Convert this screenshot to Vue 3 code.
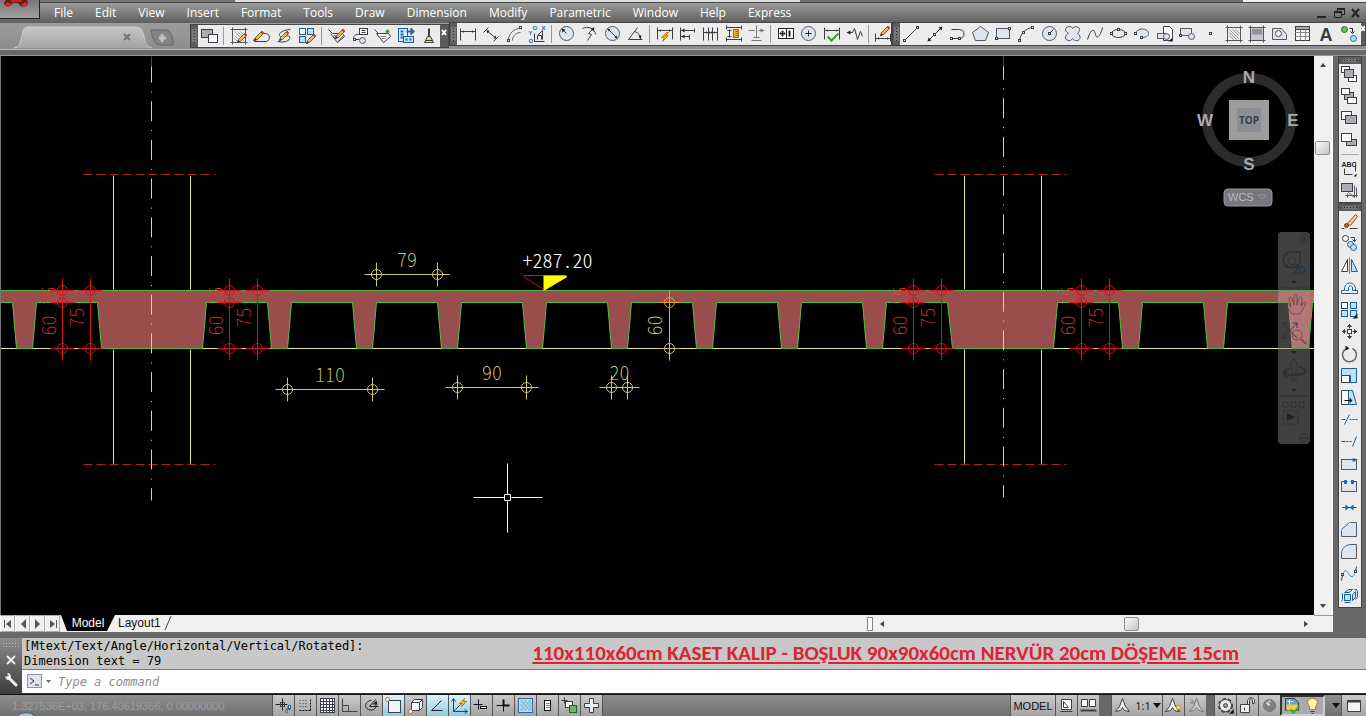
<script setup>
const menus = ['File', 'Edit', 'View', 'Insert', 'Format', 'Tools', 'Draw', 'Dimension', 'Modify', 'Parametric', 'Window', 'Help', 'Express']

// small building blocks for the icon set
const p = (d, a = '') => `<path d="${d}" ${a}/>`
const r = (x, y, w, h, a = '') => `<rect x="${x}" y="${y}" width="${w}" height="${h}" ${a}/>`
const c = (x, y, rad, a = '') => `<circle cx="${x}" cy="${y}" r="${rad}" ${a}/>`
const node = (x, y) => r(x - 1, y - 1, 2, 2, 'fill="#fff"')
const pencil = (x, y) => p(`M${x} ${y}l1-3 6-6 2 2-6 6z`, 'fill="#f3b54a" stroke="#8a5a1c"') + p(`M${x + 7} ${y - 9}l2 2`, 'stroke="#b03a2a" stroke-width="2"') + p(`M${x} ${y}l1-2 1 1z`, 'fill="#222"')
const W = 'fill="#fbfbfd"'
const G = 'fill="#a9adb3"'
const L = 'fill="#dfe5ee" stroke="#555a62"'
const B = 'stroke="#1a5f9e"'
const W_B = 'fill="#fbfbfd" stroke="#1a5f9e"'
const BF = 'fill="#bfe0f7" stroke="#1a5f9e"'
const K = 'fill="#222" stroke="none"'
const hatch = p('M3 1v17M16 1v17M1 3h17M1 16h17', 'stroke="#555"')
const dim = (y, a = 1, b = 16) => p(`M${a} ${y - 3}v12M${b} ${y - 3}v12M${a} ${y}h${b - a}`) + p(`M${a + 3} ${y - 1}v2M${b - 3} ${y - 1}v2`)

const editTools = [
  ['Draw order', r(1, 3, 11, 8, G) + r(8, 8, 9, 8, W)],
  '|',
  ['Edit hatch', hatch + p('M5 5l9 9M5 9l6 6M8 5l7 7M5 12l3 3M11 5l4 4', 'stroke="#aaa"') + pencil(8, 16)],
  ['Edit polyline', p('M1 14c2-3 5-6 8-7h4c5 0 5 7 1 8H2z') + pencil(2, 14)],
  ['Edit spline', p('M15 3C9 3 3 6 4 9s9-1 10 1-1 7-12 5') + pencil(4, 14)],
  ['Edit array', r(1, 2, 6, 6, W_B) + r(9, 2, 6, 6, BF) + r(1, 10, 6, 6, BF) + pencil(8, 17)],
  '|',
  ['Edit attribute', p('M1 3l4 4M3 7l7 9 6-7M5 7h10l2 3-7 6', W) + c(7, 10, 1) + pencil(8, 12)],
  ['Block attributes', r(9, 2, 8, 6, W) + p('M11 4h4M11 6h4M4 13c-3-3 2-6 5-5M4 13h5') + node(4, 13) + c(12, 14, 3, L)],
  ['Sync attributes', p('M1 3l4 4M3 7l7 9 7-6-2-3H5z', W) + p('M7 10h6M8 12h4', 'stroke="#888"') + p('M12 5h4M14 3v4', 'stroke="#35a048" stroke-width="2"')],
  ['Extract data', r(2, 2, 9, 13, 'fill="#d8edff" ' + B) + p('M4 5h3M4 8h3M4 11h3M10 5h7M14 2l3 3-3 3', 'stroke="#1769ae" stroke-width="2"') + r(7, 10, 10, 6, BF) + p('M9 13h2M13 13h2', 'stroke="#1769ae" stroke-width="2"')],
  ['Purge', p('M9 2v8M10 2v8') + p('M8 10h3l3 6H5z', 'fill="#f7d98a"') + p('M6 14h7')],
]
const dimTools = [
  ['Linear', dim(7)],
  ['Aligned', p('M1 8l5-5M11 17l5-5M4 6l10 8') + p('M4 6l3 0-2 3zM14 14l-3 0 2-3z', K)],
  ['Arc length', p('M3 16C3 9 8 4 15 4M7 16c0-5 4-8 8-8', 'stroke="#666"') + node(3, 16) + node(15, 3)],
  ['Ordinate', p('M6 9v8h10M9 15v-4h4v4M9 11l5-5v9') + `<text x="0" y="10" class="tiny">Y</text><text x="4" y="5" class="tiny">O</text><text x="13" y="5" class="tiny">X</text><text x="0" y="18" class="tiny">O</text>`],
  '|',
  ['Radius', c(9, 9, 7, L) + p('M9 9L5 5') + p('M4 4l4 1-3 3z', K)],
  ['Jogged', p('M2 4c6-3 12 0 13 6M7 16l4-6-3-1 5-5') + p('M14 3l-1 4-3-3z', K)],
  ['Diameter', c(9, 9, 7, L) + p('M4 4l10 10') + p('M4 4l3 1-2 2zM14 14l-3-1 2-2z', K)],
  ['Angular', p('M2 15h14M2 15L11 3M8 7c4 1 6 4 6 8') + p('M14 15l-2-4h3z', K)],
  '|',
  ['Quick dimension', dim(6, 2, 17) + p('M11 8l-5 5h3l-2 4 6-6h-3l3-3z', 'fill="#f7a823" stroke="#d07a00"')],
  ['Baseline', p('M2 3v13M2 6h14M2 12h9M11 10v5M16 4v4') + p('M3 6l3-2v4zM3 12l3-2v4z', K)],
  ['Continue', p('M2 3v13M7 3v13M11 3v13M16 3v13M2 8h14') + p('M5 7v2M8 7v2M10 7v2M13 7v2')],
  ['Dimension space', p('M2 3h15M2 1v4M17 1v4M2 15h15M2 13v4M17 13v4M5 5v8M3 6h4M3 12h4', '') + r(9, 5, 5, 8, 'fill="#f4b33b" stroke="#a86808"') + p('M11 7h3M11 9h3M11 11h3', 'stroke="#a86808"')],
  ['Dimension break', p('M1 6h6M11 6h6M9 1v12M4 16h10M6 13h6', 'stroke="#777"') + p('M17 6l-4-2v4z', 'fill="#777" stroke="none"')],
  '|',
  ['Tolerance', r(2, 4, 15, 10, 'fill="#fff" stroke="#222"') + p('M10 4v10', 'stroke="#222"') + c(6, 9, 2) + p('M3 9h6M6 6v6', 'stroke="#222"') + p('M13 6v6', 'stroke="#222" stroke-width="2"')],
  ['Center mark', c(9, 9, 7, L) + p('M6 9h6M9 6v6', 'stroke="#222"')],
  ['Inspection', dim(6, 2, 17) + p('M5 12l4 4 7-7', 'stroke="#3e9a35" stroke-width="2"')],
  ['Jogged linear', p('M2 8h5l2-4 3 11 3-8 2 5') + p('M1 8l4-2v4z', K)],
  '|',
  ['Dimension edit', p('M1 9v8M16 9v8M1 14h15M4 13v2M13 13v2') + pencil(6, 11)],
]
const drawTools = [
  ['Line', p('M2 16L15 3') + node(2, 16) + node(15, 3)],
  ['Construction line', p('M3 16L16 3') + node(9, 10) + p('M2 17l1-4 3 3zM17 2l-1 4-3-3z', K)],
  ['Polyline', p('M3 5h8c6 0 6 9 0 9H3') + node(3, 14) + node(11, 14)],
  ['Polygon', p('M9 2l8 6-3 8H4L1 8z', L)],
  ['Rectangle', r(2, 4, 13, 10, L) + node(2, 14) + node(15, 4)],
  ['Arc', p('M2 16C3 9 8 4 15 3') + node(2, 16) + node(15, 3) + node(6, 8)],
  ['Circle', c(9, 9, 7, L) + p('M9 9l4-4') + node(9, 9)],
  ['Revision cloud', p('M5 9c-5-3-3-7 1-7 2 0 3 1 3 2 2-3 8-2 7 2-1 2-2 3-2 3 5 3 2 8-2 7-2 0-3-2-3-2-2 4-8 2-7-2 1-2 3-3 3-3z', L)],
  ['Spline', p('M1 15C5 2 8 5 9 10s5 2 7-7')],
  ['Ellipse', `<ellipse cx="9" cy="9" rx="7" ry="4" fill="#e8edf4"/>` + node(2, 9) + node(16, 9) + node(9, 5)],
  ['Ellipse arc', p('M3 9c1-6 13-6 13 0 0 3-3 4-7 4', L) + node(3, 9) + node(9, 13)],
  ['Insert block', p('M8 2h6l3 3v11H8z', W) + r(2, 9, 8, 5, L) + c(11, 12, 3, L) + p('M13 17l4-4v4z', K)],
  ['Make block', r(2, 4, 11, 7, L) + c(13, 12, 3, L) + node(2, 11)],
  ['Point', node(9, 9)],
  ['Hatch', hatch + p('M5 5l9 9M5 8l7 7M5 11l4 4M8 5l6 6M11 5l4 4', 'stroke="#999"')],
  ['Gradient', hatch + r(4, 4, 11, 11, 'fill="#8e949c" stroke="none"') + r(4, 10, 11, 5, 'fill="#c6cacf" stroke="none"')],
  ['Region', p('M2 4h9l5 6v5H2z', L) + c(8, 9, 3, W)],
  ['Table', r(2, 2, 14, 14, W) + r(2, 2, 14, 3, G) + p('M2 8h14M2 12h14M7 5v11M12 5v11', 'stroke="#888"')],
  ['Multiline text', `<text x="3" y="16" class="bigA">A</text>`],
  ['Add selected', c(5, 5, 3, 'fill="#6cb94f" stroke="#32752a"') + c(14, 14, 3, 'fill="#a5d7f5" stroke="#1a6fae"') + p('M10 4h3v4M11 7l2 2 2-2', 'stroke="#222"')],
]
const orderTools = [
  ['Bring to front', r(1, 1, 8, 6, W) + r(8, 10, 8, 6, W) + r(4, 4, 9, 8, G)],
  ['Send to back', r(4, 5, 9, 7, G) + r(1, 1, 8, 6, W) + r(7, 10, 9, 6, W)],
  ['Bring above', r(1, 2, 10, 8, W) + r(5, 6, 11, 8, G)],
  ['Send under', r(6, 8, 10, 6, G) + r(1, 2, 10, 8, W)],
  '|',
  ['Text to front', `<text x="1" y="7" class="abc">ABC</text>` + p('M4 9v6h8M15 4v8') + p('M13 17l3-3v3z', K)],
  ['Hatch to back', r(1, 2, 11, 8, G) + p('M7 12v4M16 6v10M5 14h12M14 4v12M8 11l6 5', 'stroke="#555"')],
]
const modifyTools = [
  ['Erase', p('M7 11L15 2l2 2-7 9z', 'fill="#f2ca85" stroke="#8a5a20"') + c(6, 13, 2, 'fill="#c95c28" stroke="#803812"') + p('M1 16h3M9 16h8')],
  ['Copy', c(5, 4, 3, W) + c(10, 10, 3, BF) + c(13, 13, 3, BF) + p('M10 3h4v4M12 5l2 2 2-2')],
  ['Mirror', p('M7 3v12H1z', W) + p('M11 3v12h6z', BF) + p('M9 1v16', 'stroke="#777"')],
  ['Offset', p('M1 15v-3h3c-1-10 12-10 11 0h2v3zM5 12h3V9c0-2 4-2 4 0v3h4', 'fill="#eaf5fd" stroke="#1a5f9e"')],
  ['Array', r(1, 2, 6, 6, W) + r(10, 2, 6, 6, BF) + r(1, 10, 6, 6, BF) + r(10, 10, 6, 6, BF) + p('M12 18l5-5v5z', K)],
  ['Move', p('M9 2v4M9 12v4M2 9h4M12 9h4M7 4l2-2 2 2zM7 14l2 2 2-2zM4 7L2 9l2 2zM14 7l2 2-2 2z', 'fill="#333"') + r(7, 7, 4, 4, W)],
  ['Rotate', p('M6 4a7 7 0 1 0 6 0', 'stroke-width="1.5" stroke="#666"') + p('M5 1l4 3-4 2z', K)],
  ['Scale', p('M1 2h15v14h-6V9H1z', BF) + r(1, 9, 8, 7, W)],
  ['Stretch', p('M1 2h7v14H1z', W) + p('M8 2h4l4 14H8z', BF) + p('M4 12h6', 'stroke="#111"') + p('M9 9l3 3-3 3z', K)],
  ['Trim', p('M1 9h4', B) + p('M4 14L9 4', B) + p('M9 9h2M12 9h2M15 9h2', B)],
  ['Extend', p('M1 9h4M6 9h2M9 9h2') + p('M12 14l4-10', B)],
  ['Break at point', r(1, 5, 15, 10, L) + p('M12 4h3v3h-3z', 'fill="#1769ae" stroke="none"') + p('M14 5h3', 'stroke="#1769ae"')],
  ['Break', r(1, 5, 15, 10, L) + p('M7 5h3', 'stroke="#ececec" stroke-width="3"') + p('M4 4h2v3H4zM11 4h2v3h-2z', 'fill="#1769ae" stroke="#1769ae"')],
  ['Join', p('M2 9h14') + p('M5 6l4 3-4 3zM13 6L9 9l4 3z', 'fill="#1769ae" stroke="none"')],
  ['Chamfer', p('M10 2h6v14H1v-6', L) + p('M1 9l8-7', 'stroke="#1769ae"')],
  ['Fillet', p('M10 2h6v14H1v-5', L) + p('M1 11c0-5 4-9 10-9', 'stroke="#1769ae"')],
  ['Blend curves', p('M2 12C3 5 6 5 8 9s5 5 7-2', 'stroke="#3f8fd0"') + p('M1 16l1-6M15 7l1-5') + node(2, 10) + node(15, 7)],
  ['Explode', r(4, 8, 6, 6, BF) + p('M4 6l4-3h4l-3 3zM12 8l3-3v6l-3 3z', BF) + p('M2 7v6l-1 2M14 3h2l1 2v5l-2 3M4 16h6', B)],
]
const toggles = [
  ['Infer constraints', p('M1 8h12M8 2v12', 'stroke="#222"') + r(6, 6, 4, 4) + p('M13 10v6h-2v-3h5v-3', 'stroke="#b5592a"') + r(14, 9, 2, 3, W_B)],
  ['Snap', p('M3 4h9M3 7h9M3 10h9', 'stroke-dasharray="1 2" stroke="#333"') + p('M3 14h12M14 3v11', 'stroke-dasharray="2 1" stroke="#111"')],
  ['Grid', r(2, 2, 14, 14, W) + p('M2 5h14M2 8h14M2 11h14M2 14h14M5 2v14M8 2v14M11 2v14M14 2v14')],
  ['Ortho', p('M2 2v13h15M2 9h6v6', 'stroke="#444"')],
  ['Polar', p('M9 4c-6 0-8 7-3 9s9-2 7-6M7 10h9M7 10l6-7', 'stroke="#222"') + p('M10 8h5l-1-4z', K)],
  ['Object snap', r(4, 4, 12, 12, 'fill="#f2f5f8"') + c(3, 3, 2, 'fill="#fff" stroke="#c0602d"'), true],
  ['3D object snap', p('M5 6l3-3h8v8l-3 3H5z', W) + p('M13 14V6H5M13 6l3-3') + c(4, 15, 2, 'fill="#fff" stroke="#c0602d"')],
  ['Object snap tracking', p('M3 14L13 4M3 14h11', 'stroke="#222"'), true],
  ['Dynamic UCS', p('M3 2v13h14M3 15l7-7M1 5l2-3 2 3M14 13l3 2-3 2') + p('M14 2l-5 5h3l-1 3 5-5h-3z', 'fill="#ffc84b" stroke="#b67814"'), true],
  ['Dynamic input', p('M1 8h9M6 3v10', 'stroke="#111"') + r(8, 10, 6, 2, 'fill="#fff" stroke="#111"')],
  ['Lineweight', p('M2 9h12M9 9v6', 'stroke="#111"') + p('M9 3v6h6', 'stroke="#111" stroke-width="2"')],
  ['Transparency', r(2, 2, 14, 14, 'fill="#b9def2" stroke="#31668f"') + p('M4 5h12M4 9h12M4 13h12', 'stroke="#78b2d6" stroke-dasharray="2 2" stroke-width="2"') + p('M6 7h10M6 11h10', 'stroke="#78b2d6" stroke-dasharray="2 2" stroke-width="2"')],
  ['Quick properties', r(6, 4, 6, 10, 'fill="#fff" stroke="#111"') + p('M8 7h3M8 9h3M8 11h3', 'stroke="#111" stroke-dasharray="1 1"')],
  ['Selection cycling', p('M1 4h6M4 1v6') + r(5, 5, 7, 6, W) + r(9, 9, 7, 7, 'fill="#72b36a" stroke="#255f22"')],
  ['Annotation monitor', p('M7 2h4v5h5v4h-5v5H7v-5H2V7h5z', 'fill="#e5edf7"')],
]

// geometry of the ribbed slab section
const cavities = [
  [-6, -2, 16, 12], [36, 32, 101, 97], [206, 202, 271, 267],
  ...[291, 376, 461, 546, 631, 716, 801].map((x) => [x, x - 4, x + 65, x + 61]),
  [886, 882, 952, 947], [1057, 1053, 1122, 1118], [1142, 1138, 1207, 1203], [1227, 1223, 1292, 1288], [1312, 1308, 1377, 1373],
]
const cavity = ([tl, bl, br, tr]) => `M${bl} 348L${tl} 302H${tr}L${br} 348`
const solids = [[12, 36, 32, 16], [97, 206, 202, 101], ...[267, 352, 437, 522, 607, 692, 777, 862].map((x) => [x, x + 24, x + 20, x + 4]), [947, 1057, 1053, 952], [1118, 1142, 1138, 1122], [1203, 1227, 1223, 1207], [1288, 1312, 1308, 1292]]
const slab = 'M0 290H1316V302H0Z' + solids.map(([a, b, d, e]) => `M${a} 302H${b}L${d} 348H${e}Z`).join('')
const axes = [{ x: 151, y: 62, e: 500 }, { x: 1003, y: 59, e: 497 }]
const redDims = [62, 229, 913, 1081]
const yDims = [
  { a: 376, b: 437, y: 274, t: '79', ty: 266 },
  { a: 287, b: 372, y: 389, t: '110', ty: 381 },
  { a: 457, b: 526, y: 387, t: '90', ty: 379 },
  { a: 611, b: 627, y: 387, t: '20', ty: 379 },
]
const mark = (x, y) => `M${x - 12} ${y}h24M${x} ${y - 12}v24M${x - 5} ${y}a5 5 0 1 0 10 0a5 5 0 1 0 -10 0`
</script>

<template>
  <div class="app">
    <div class="strip"></div>
    <button class="logo" aria-label="Application menu">
      <svg width="38" height="18" viewBox="0 0 38 18"><path d="M5 0h21l1 3c-1 4-7 5-9 1l-1-1h-5l-1 1c-2 4-8 3-8-1z" fill="#6d1712" /><path d="M6 2l5 2c-2 3-5 4-7 1zM25 2l-5 2c2 3 5 4 7 1z" fill="#c8301c" /><path d="M10 0h11v2H10z" fill="#c8201a" /></svg>
    </button>
    <nav class="menu">
      <button v-for="m in menus" :key="m">{{ m }}</button>
      <div class="wins">
        <button aria-label="Minimize"><svg width="12" height="14"><path d="M1 11h9" stroke="#222" stroke-width="2" /></svg></button>
        <button aria-label="Restore"><svg width="12" height="14" fill="none" stroke="#222"><path d="M4.500 5V2.500h7v6H9" stroke-width="1" /><path d="M4 3h8M1 6h8" stroke-width="2" /><path d="M1.500 5.500h7v6h-7z" /></svg></button>
        <button aria-label="Close"><svg width="12" height="14"><path d="M2 3l7 8M9 3l-7 8" stroke="#222" stroke-width="2" /></svg></button>
      </div>
    </nav>
    <div class="toolrow">
      <div class="filetabs">
        <svg width="190" height="26" viewBox="0 0 190 26">
          <defs><linearGradient id="tabg" x1="0" y1="0" x2="0" y2="1"><stop offset="0" stop-color="#c6c6c6" /><stop offset="1" stop-color="#a4a4a4" /></linearGradient></defs>
          <path d="M14 25c6-1 6-5 8-12 1-7 2-9 6-9h108c5 0 6 3 8 9 1 7 3 11 8 12z" fill="url(#tabg)" />
          <path d="M14 25c6-1 6-5 8-12 1-7 2-9 6-9h108c5 0 6 3 8 9 1 7 3 11 8 12" fill="none" stroke="#cfcfcf" />
          <path d="M124 11l6 6M130 11l-6 6" stroke="#737373" stroke-width="2" />
          <path d="M151 7h14c5 0 8 4 8 15h-12c-6 0-9-6-10-15z" fill="#858585" stroke="#686868" />
          <path d="M159 15h7M162 11v8" stroke="#c3c3c3" stroke-width="3" />
        </svg>
      </div>
      <div class="bar low">
        <i class="grip"></i>
        <template v-for="(t, i) in editTools" :key="i">
          <i v-if="t === '|'" class="sep"></i>
          <button v-else :aria-label="t[0]"><svg class="ic" viewBox="-0.5 -0.5 20 20" v-html="t[1]"></svg></button>
        </template>
        <button class="barclose" aria-label="Close toolbar"><svg width="6" height="12"><path d="M1 5l4 5M5 5l-4 5" stroke="#fff" stroke-width="2" /></svg></button>
      </div>
      <div class="bar">
        <i class="grip"></i>
        <template v-for="(t, i) in dimTools" :key="i">
          <i v-if="t === '|'" class="sep"></i>
          <button v-else :aria-label="t[0]"><svg class="ic" viewBox="-0.5 -0.5 20 20" v-html="t[1]"></svg></button>
        </template>
      </div>
      <div class="bar last">
        <i class="grip"></i>
        <button v-for="t in drawTools" :key="t[0]" :aria-label="t[0]"><svg class="ic" viewBox="-0.5 -0.5 20 20" v-html="t[1]"></svg></button>
        <button class="barclose" aria-label="Close toolbar"><svg width="6" height="12"><path d="M1 3l4 5M5 3l-4 5" stroke="#fff" stroke-width="2" /></svg></button>
      </div>
    </div>
    <div class="band"></div>

    <main class="work">
      <section class="doc">
        <div class="view">
          <svg class="drawing" viewBox="1 56 1313 559" preserveAspectRatio="xMinYMin slice">
            <g transform="translate(0.500 0.500)" class="lines">
              <path d="M0 348H1314" stroke="#e6e68c" />
              <path :d="slab" fill="#994d4d" />
              <path d="M0 290H1314" stroke="#4fb53a" />
              <path v-for="(v, i) in cavities" :key="i" :d="cavity(v)" stroke="#4fc23a" />
              <path d="M16 348H32M101 348H202M271 348h16M356 348h16M441 348h16M526 348h16M611 348h16M696 348h16M781 348h16M866 348h16M952 348h101M1122 348h16M1207 348h16M1292 348h16" stroke="#4fb53a" />
              <path d="M113 175V289M190 175V289M113 349V463M190 349V463M964 175V289M1041 175V289M964 349V463M1041 349V463" stroke="#e6e68c" />
              <path d="M83 174H215M83 464H215M934 174h132M934 464h132" stroke="#b32020" stroke-dasharray="9 4" />
              <template v-for="a in axes" :key="a.x">
                <path :d="`M${a.x} ${a.y}V${a.e}`" stroke="#cfcfcf" stroke-dasharray="20 9 1 8.7" />
                <path :d="`M${a.x} 56v10`" stroke="#c01818" />
              </template>
              <g v-for="x in redDims" :key="x">
                <path :d="mark(x, 290) + mark(x, 302) + mark(x, 348) + mark(x + 28, 290) + mark(x + 28, 348) + `M${x} 290V348M${x + 28} 290V348`" stroke="#d41616" />
                <text :transform="`translate(${x - 7} 296) rotate(-90)`" class="cad red">15</text>
                <text :transform="`translate(${x - 7} 325) rotate(-90)`" class="cad red">60</text>
                <text :transform="`translate(${x + 21} 317) rotate(-90)`" class="cad red">75</text>
              </g>
              <g v-for="d in yDims" :key="d.t">
                <path :d="mark(d.a, d.y) + mark(d.b, d.y) + `M${d.a} ${d.y}H${d.b}`" stroke="#c9c973" />
                <text :x="(d.a + d.b) / 2" :y="d.ty" class="cad">{{ d.t }}</text>
              </g>
              <path :d="mark(669, 348) + 'M669 302V348'" stroke="#c9c973" />
              <path :d="mark(669, 302)" stroke="#d8a520" />
              <text transform="translate(661 325) rotate(-90)" class="cad">60</text>
              <path d="M523 275H566M523 276L543 289" stroke="#c01818" />
              <path d="M543 275H566V277L544 290H543Z" fill="#ffff00" />
              <text x="557" y="267" class="cad white">+287.20</text>
              <path d="M473 497h31M511 497h31M507 463v31M507 501v31M504 494h6v6h-6z" stroke="#f2f2f2" />
            </g>
            <circle cx="1249" cy="120" r="42" fill="none" stroke="#2b2b2b" stroke-width="10" />
            <g class="compass"><text x="1249" y="83">N</text><text x="1249" y="170">S</text><text x="1205" y="126">W</text><text x="1293" y="126">E</text></g>
            <rect x="1229" y="100" width="40" height="40" fill="#9c9c9c" /><rect x="1237" y="108" width="24" height="24" fill="#8b8f95" />
            <text x="1249" y="124" class="top">TOP</text>
            <rect x="1224" y="189" width="48" height="17" rx="4" fill="#77777d" stroke="#96969c" />
            <text x="1228" y="201" class="wcs">WCS</text><path d="M1258 195h8l-4 4z" fill="none" stroke="#94949a" />
            <rect x="1278" y="232" width="32" height="212" rx="4" fill="#808080" fill-opacity=".5" />
            <path d="M1279 291h35v11h-2l-4 46h-16l-4-46h-10z" fill="#e08a8a" fill-opacity=".45" />
            <g fill="none" stroke="#2d2d2d" stroke-opacity=".8">
              <circle cx="1304" cy="238" r="4" /><path d="M1302 236l4 4M1306 236l-4 4M1279 288h30M1279 396h30" />
              <path d="M1283 261a9 9 0 0 1 9-9h8v10a9 9 0 0 1-17-1z" stroke-width="2" /><circle cx="1292" cy="261" r="4" /><path d="M1288 265l-3 3M1295 265l3 3" />
              <path d="M1287 307c-3-6 2-5 4 0l-2-8c0-3 3-2 3 0l2 6v-9c1-2 3-2 3 0v9l2-7c1-2 3-1 3 1l-1 7 3-4c2-1 2 1 1 3l-5 9h-8z" stroke="#713f3f" />
              <path d="M1283 323l14 15M1297 323l-14 15M1283 328v-5h5M1283 333v5h5M1293 323h4v5" /><circle cx="1297" cy="335" r="5" stroke="#6d4545" /><path d="M1301 339l5 5" stroke="#6d4545" stroke-width="2" />
              <path d="M1292 380v-15h-3l5-6 4 6h-2v15z" /><path d="M1290 368c-10 3-8 7 4 7s16-5 5-8M1287 371l-3 3 3 4" stroke-width="2" />
              <path d="M1283 402h5v5h-5zM1291 402h5v5h-5zM1299 402h5v5h-5zM1283 411h15v13h-15z" /><circle cx="1304" cy="438" r="4" /><path d="M1301 438h6" />
            </g>
            <path d="M1287 413v8l8-4zM1291 281h6l-3 3zM1291 351h6l-3 3zM1291 389h6l-3 3z" fill="#222" />
            <text x="1293" y="274" class="two">2D</text>
          </svg>
          <div class="vscroll">
            <button aria-label="Scroll up"><svg width="8" height="6"><path d="M1 5h6L4 1z" fill="#444" /></svg></button>
            <i class="thumb"></i>
            <button aria-label="Scroll down"><svg width="8" height="6"><path d="M1 1h6L4 5z" fill="#444" /></svg></button>
          </div>
        </div>
        <div class="tabs">
          <button class="nav" aria-label="First tab"><svg width="12" height="12"><path d="M9 2v8L4 6z" fill="#555" /><path d="M2.500 2v8" stroke="#555" /></svg></button>
          <button class="nav" aria-label="Previous tab"><svg width="12" height="12"><path d="M9 1v10L4 6z" fill="#555" /></svg></button>
          <button class="nav" aria-label="Next tab"><svg width="12" height="12"><path d="M3 1v10l5-5z" fill="#555" /></svg></button>
          <button class="nav" aria-label="Last tab"><svg width="12" height="12"><path d="M3 2v8l5-4z" fill="#555" /><path d="M9.500 2v8" stroke="#555" /></svg></button>
          <button class="tab on">Model</button>
          <button class="tab">Layout1</button>
          <svg class="slash" width="9" height="16"><path d="M2 15L8 1" stroke="#444" /></svg>
          <div class="hscroll">
            <i class="split"></i>
            <button aria-label="Scroll left"><svg width="6" height="8"><path d="M5 1v6L1 4z" fill="#444" /></svg></button>
            <i class="thumb"></i>
            <button aria-label="Scroll right"><svg width="6" height="8"><path d="M1 1v6l4-3z" fill="#444" /></svg></button>
          </div>
          <i class="corner"></i>
        </div>
      </section>
      <aside class="side">
        <div class="vbar">
          <i class="hgrip"></i>
          <template v-for="(t, i) in orderTools" :key="i">
            <i v-if="t === '|'" class="vsep"></i>
            <button v-else :aria-label="t[0]"><svg class="ic" viewBox="-0.5 -0.5 20 20" v-html="t[1]"></svg></button>
          </template>
        </div>
        <div class="vbar">
          <i class="hgrip"></i>
          <button v-for="t in modifyTools" :key="t[0]" :aria-label="t[0]"><svg class="ic" viewBox="-0.5 -0.5 20 20" v-html="t[1]"></svg></button>
        </div>
      </aside>
    </main>

    <section class="command">
      <div class="cmdside">
        <i class="cmdgrip"></i>
        <button aria-label="Close command window"><svg width="12" height="12"><path d="M2 2l8 8M10 2l-8 8" stroke="#eee" stroke-width="2" /></svg></button>
        <button aria-label="Customize"><svg width="16" height="16"><path d="M5 5l8 8" stroke="#eee" stroke-width="3" stroke-linecap="round" /><path d="M2 4c0 5 6 5 6 1 0-2-1-4-4-4l2 3-2 2z" fill="#eee" /></svg></button>
      </div>
      <div class="cmdmain">
        <div class="history">
          <div class="log"><div>[Mtext/Text/Angle/Horizontal/Vertical/Rotated]:</div><div>Dimension text = 79</div></div>
          <div class="title">110x110x60cm KASET KALIP - BOŞLUK 90x90x60cm NERVÜR 20cm DÖŞEME 15cm</div>
        </div>
        <div class="prompt">
          <button aria-label="Recent commands"><svg width="25" height="15" viewBox="0 0 25 15"><rect x=".5" y=".5" width="14" height="13" fill="#dfe4ee" stroke="#8d93a0" /><path d="M3 4l4 3-4 3M8 11h4" fill="none" stroke="#333" /><path d="M19 6h5l-2.500 3z" fill="#666" /></svg></button>
          <input type="text" placeholder="Type a command" aria-label="Command" />
        </div>
      </div>
    </section>

    <footer class="status">
      <div class="coords">1.327536E+03, 176.40619356, 0.00000000</div>
      <i class="orb"></i>
      <button v-for="t in toggles" :key="t[0]" class="st" :class="{ lit: t[2] }" :aria-label="t[0]"><svg class="ic" viewBox="-0.5 -0.5 20 20" v-html="t[1]"></svg></button>
      <div class="fill"></div>
      <button class="st model">MODEL</button>
      <button class="st" aria-label="Quick view layouts"><svg class="ic" viewBox="-0.5 -0.5 20 20"><path d="M4 3h10v10H4z" fill="#fff" /><path d="M6 5v6h5zM3 15h12" /></svg></button>
      <button class="st" aria-label="Quick view drawings"><svg class="ic" viewBox="-0.5 -0.5 20 20"><path d="M2 3h6v7H2zM10 3h6v7h-6z" fill="#fff" /><path d="M1 14h16" stroke-width="2" /></svg></button>
      <i class="gap wide"></i>
      <button class="st scale"><svg class="ic" viewBox="-0.5 -0.5 20 20"><path d="M9 2l3 8 4 5-5-1-2-3-2 3-5 1 4-5z" fill="#e8edf2" /></svg><span>1:1</span><svg width="8" height="6"><path d="M0 0h8L4 5z" fill="#111" /></svg></button>
      <button class="st" aria-label="Annotation visibility"><svg class="ic" viewBox="-0.5 -0.5 20 20"><path d="M8 2l3 8 4 5-5-1-2-3-2 3-5 1 4-5z" fill="#f3f3f3" /><circle cx="14" cy="11" r="2" fill="#ffdd73" stroke="#d08a1b" /><path d="M13 15h2" /></svg></button>
      <button class="st" aria-label="Auto scale"><svg class="ic faint" viewBox="-0.5 -0.5 20 20"><path d="M10 2l3 8 4 5-5-1-2-3-2 3-5 1 4-5z" fill="#c8c8c8" /><path d="M4 3l4 3M3 6l4 1" /></svg></button>
      <i class="gap"></i>
      <button class="st" aria-label="Workspace"><svg class="ic" viewBox="-0.5 -0.5 20 20"><circle cx="9" cy="9" r="6" stroke-width="3" stroke-dasharray="3 2" /><circle cx="9" cy="9" r="6" fill="#eee" /><circle cx="9" cy="9" r="2" fill="#999" /><path d="M13 17l4-4v4z" fill="#111" /></svg></button>
      <button class="st" aria-label="Lock interface"><svg class="ic" viewBox="-0.5 -0.5 20 20"><path d="M2 8h9v8H2zM9 8V4c1-4 7-3 7 0v3h-2V4c0-2-3-2-3 0v4M6 11v3" fill="#eee" /></svg></button>
      <button class="st" aria-label="Hardware acceleration"><svg class="ic faint" viewBox="-0.5 -0.5 20 20"><circle cx="9" cy="9" r="6" fill="#7b8084" /><path d="M9 9L6 6M9 4v2" stroke="#ddd" stroke-width="2" /></svg></button>
      <div class="tray">
        <button aria-label="Drawing status"><svg class="ic" viewBox="-0.5 -0.5 20 20"><path d="M3 2h9l4 4v8H3z" fill="#65a1d0" /><path d="M4 8h11v6H4z" fill="#f1cd3c" stroke="none" /><path d="M5 5h6M7 3v5" stroke="#fff" /><path d="M8 13l3 3 6-6" stroke="#42a43a" stroke-width="2" /></svg></button>
        <button aria-label="Tips"><svg class="ic" viewBox="-0.5 -0.5 20 20"><path d="M6 10c-4-5-1-8 3-8s7 3 3 8v3H6z" fill="#ffefb8" stroke="#a88032" /><path d="M7 15h4M8 17h2" /></svg></button>
      </div>
      <button class="more" aria-label="Status menu"><svg width="8" height="6"><path d="M0 0h8L4 5z" fill="#111" /></svg></button>
      <button class="st clean" aria-label="Clean screen"><svg class="ic" viewBox="-0.5 -0.5 20 20"><path d="M3 4h13v11H3z" fill="#f4f4f4" /><path d="M3 5h13" stroke-width="2" /></svg></button>
    </footer>
  </div>
</template>

<style>
html, body { margin: 0; background: #6a6a6a; }
</style>

<style scoped>
.app { position: relative; display: flex; flex-direction: column; height: 100vh; min-width: 1180px; overflow: hidden; background: #686868; font-family: "Open Sans", "Noto Sans", sans-serif; font-size: 12px; color: #111; }
button { margin: 0; padding: 0; border: 0; background: none; font: inherit; color: inherit; display: flex; align-items: center; justify-content: center; flex: none; }
svg { display: block; flex: none; }
i { display: block; flex: none; }
.ic { width: 20px; height: 20px; fill: none; stroke: #3b3f46; stroke-width: 1; }
.ic.faint { stroke: #777; }
.ic :deep(.tiny) { font: bold 6px "Liberation Sans", sans-serif; fill: #1769ae; stroke: none; }
.ic :deep(.bigA) { font: bold 18px "Liberation Sans", sans-serif; fill: #3a3e44; stroke: none; }
.ic :deep(.abc) { font: bold 7px "Liberation Sans", sans-serif; fill: #222; stroke: none; }

.strip { height: 2px; flex: none; background: linear-gradient(90deg, #777 0 235px, #ddd 235px 800px, #6d6d6d 800px 1243px, #f3eef3 1243px); border-bottom: 1px solid #444; }
.logo { position: absolute; left: 0; top: 0; width: 40px; height: 19px; background: linear-gradient(#777, #a0a0a0); border-right: 1px solid #222; border-bottom: 1px solid #222; align-items: flex-start; }
.menu { display: flex; align-items: center; gap: 22px; height: 20px; flex: none; padding: 0 4px 0 54px; background: linear-gradient(#9b9b9b, #5f5f5f); color: #fff; }
.menu > button { line-height: 18px; }
.wins { margin-left: auto; display: flex; gap: 5px; }
.toolrow { display: flex; height: 26px; flex: none; background: linear-gradient(#9c9c9c, #8d8d8d); border-bottom: 1px solid #bbb; }
.filetabs { width: 190px; flex: none; }
.bar { display: flex; align-items: center; box-sizing: border-box; height: 24px; margin-top: -1px; background: #ececec; border: 1px solid #444; flex: none; }
.bar.low { margin-top: 1px; }
.bar button { width: 23px; height: 22px; }
.bar:nth-child(3) { width: 443px; overflow: hidden; }
.bar.last { flex: 1; overflow: hidden; }
.grip { width: 7px; height: 22px; background: radial-gradient(circle, #222 1px, #777 1px) 1px 3px / 3px 3px #5c5c5c; border: solid #5c5c5c; border-width: 4px 1px; box-sizing: border-box; }
.sep { width: 1px; height: 18px; margin: 0 3px 0 2px; background: #999; }
.bar .barclose { width: 8px; height: 22px; margin-left: auto; background: #5c5c5c; align-items: flex-start; }
.bar.last .barclose { width: 4px; }
.band { height: 5px; flex: none; background: #686868; border-bottom: 1px solid #999; box-sizing: content-box; }

.work { flex: 1; min-height: 0; display: flex; }
.doc { flex: 1; min-width: 0; display: flex; flex-direction: column; }
.view { flex: 1; min-height: 0; display: flex; border-left: 1px solid #777; }
.drawing { flex: 1; min-width: 0; height: 100%; background: #000; }
.lines { fill: none; stroke: none; stroke-width: 1; }
.cad { font: 100 20px "Noto Sans CJK JP", "Liberation Sans", sans-serif; font-feature-settings: "hwid"; fill: #e6e688; stroke: none; text-anchor: middle; }
.cad.red { fill: #f03434; }
.cad.white { fill: #fff; font-weight: 300; }
.compass text { font: bold 17px "Liberation Sans", sans-serif; fill: #aaa; text-anchor: middle; }
.top { font: bold 10px "Open Sans", sans-serif; fill: #3c3c40; text-anchor: middle; }
.wcs { font: 11px "Liberation Sans", sans-serif; fill: #b8b8be; }
.two { font: bold 10px "Liberation Sans", sans-serif; fill: #28344a; }
.vscroll { width: 17px; flex: none; display: flex; flex-direction: column; align-items: center; background: #f0f0f0; border-right: 2px solid #fafafa; }
.vscroll button { width: 17px; height: 18px; }
.vscroll button:last-child { margin-top: auto; }
.thumb { width: 15px; height: 14px; box-sizing: border-box; border: 1px solid #909090; border-radius: 2px; background: linear-gradient(135deg, #fafafa, #c4c4c4); }
.vscroll .thumb { margin-top: 67px; }
.tabs { display: flex; height: 17px; flex: none; background: #f0f0f0; color: #111; font-family: "Liberation Sans", sans-serif; }
.nav { width: 15px; height: 17px; box-sizing: border-box; border: 1px solid #aaa; border-left-color: #fff; }
.tab { height: 16px; }
.tab.on { width: 54px; margin-left: 1px; background: #000; color: #fff; clip-path: polygon(0 0, 100% 0, 46px 100%, 6px 100%); }
.tab:not(.on) { padding: 0 2px 0 3px; }
.hscroll { margin-left: auto; width: 447px; display: flex; align-items: center; }
.split { width: 4px; height: 12px; border: 1px solid #888; background: #fff; }
.hscroll button { width: 17px; height: 16px; }
.hscroll .thumb { margin-left: 234px; }
.hscroll button:last-child { margin-left: auto; }
.corner { width: 19px; height: 16px; border-top: 1px solid #999; }
.side { width: 24px; flex: none; margin: 0 4px 0 5px; }
.vbar { display: flex; flex-direction: column; align-items: center; box-sizing: border-box; background: #ececec; border: 1px solid #444; }
.vbar button { width: 22px; height: 22px; }
.hgrip { align-self: stretch; height: 7px; box-sizing: border-box; border: solid #5c5c5c; border-width: 2px 4px; background: radial-gradient(circle, #222 1px, #777 1px) 0 0 / 3px 3px; }
.vsep { width: 18px; height: 1px; margin: 2px 0 3px; background: #aaa; }

.command { display: flex; height: 56px; margin-top: 6px; flex: none; }
.cmdside { width: 22px; flex: none; display: flex; flex-direction: column; align-items: center; justify-content: space-between; padding: 4px 0 6px; box-sizing: border-box; background: linear-gradient(#8c8c8c, #3c3c3c); }
.cmdgrip { width: 18px; height: 5px; background: radial-gradient(circle, #bbb 1px, transparent 1px) 0 0 / 3px 3px; }
.cmdmain { flex: 1; min-width: 0; }
.history { display: flex; justify-content: space-between; align-items: flex-start; height: 32px; background: #c8c8c8; border-bottom: 1px solid #777; box-sizing: border-box; padding: 0 127px 0 2px; white-space: nowrap; }
.log { font: 12px/15px "DejaVu Sans Mono", "Liberation Mono", monospace; padding-top: 1px; color: #000; }
.title { font: bold 21px/30px Carlito, Lato, sans-serif; color: #dc2430; text-decoration: underline; text-decoration-thickness: 2px; text-underline-offset: 2px; }
.prompt { display: flex; align-items: center; height: 24px; background: #fff; padding-left: 5px; border-bottom: 1px solid #333; box-sizing: border-box; }
.prompt input { flex: 1; min-width: 0; border: 0; outline: 0; padding: 0 0 0 6px; background: none; font: italic 12px/20px "DejaVu Sans Mono", "Liberation Mono", monospace; }
.prompt input::placeholder { color: #8c8c8c; opacity: 1; }

.status { position: relative; display: flex; align-items: stretch; height: 22px; flex: none; background: linear-gradient(#8f8f8f, #707070); box-sizing: border-box; border-top: 1px solid #111; overflow: hidden; }
.coords { width: 272px; flex: none; box-sizing: border-box; padding-left: 12px; font: 11px/23px "Liberation Sans", sans-serif; color: #9c9c9c; white-space: nowrap; }
.orb { position: absolute; left: 12px; top: 17px; width: 28px; height: 28px; border-radius: 50%; background: #a8c1d8; border: 1px solid #44566a; box-sizing: border-box; }
.st { width: 22px; box-sizing: border-box; border-left: 1px solid #555; background: linear-gradient(#cacaca, #a4a4a4); }
.st.lit { background: linear-gradient(#dff3fa, #8fcbe0); }
.fill { flex: 1; border-left: 1px solid #555; }
.st.model { width: 45px; font: 11px "Liberation Sans", sans-serif; }
.gap { width: 8px; background: #686868; }
.gap.wide { width: 12px; }
.st.scale { width: 51px; gap: 2px; font-size: 11px; }
.tray { display: flex; width: 45px; flex: none; align-items: center; justify-content: space-around; background: #aaa; border: 2px solid #333; border-right-color: #ccc; border-bottom-color: #ccc; box-sizing: border-box; margin-right: 6px; }
.more { width: 10px; }
.st.clean { width: 25px; }
</style>
